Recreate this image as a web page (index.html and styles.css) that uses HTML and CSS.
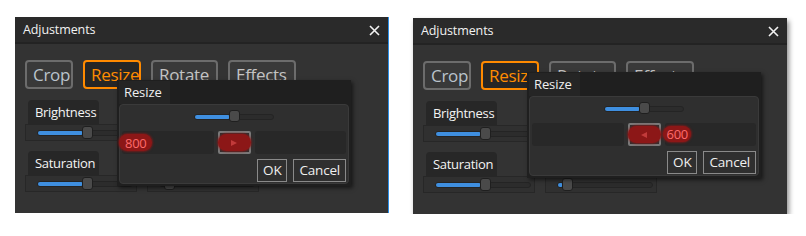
FILE: index.html
```html
<!DOCTYPE html>
<html>
<head>
<meta charset="utf-8">
<title>Adjustments</title>
<link rel="stylesheet" href="styles.css">
</head>
<body>
<div class="stage">

  <section class="window win-focused">
    <header class="titlebar">
      <span class="title">Adjustments</span>
      <svg class="close" width="11" height="11" viewBox="0 0 11 11"><path d="M1 1L10 10M10 1L1 10" stroke="#f2f2f2" stroke-width="1.6" fill="none"/></svg>
    </header>
    <div class="content">
      <nav class="tabs">
        <span class="tab tab-crop">Crop</span>
        <span class="tab tab-resize active">Resize</span>
        <span class="tab tab-rotate">Rotate</span>
        <span class="tab tab-effects">Effects</span>
      </nav>
      <div class="groups">
        <div class="group">
          <div class="glabel">Brightness</div>
          <div class="sbox"><div class="track"><div class="fill" style="width:45px"></div><div class="thumb" style="left:44px"></div></div></div>
        </div>
        <div class="group">
          <div class="glabel">Contrast</div>
          <div class="sbox"><div class="track"><div class="fill" style="width:45px"></div><div class="thumb" style="left:44px"></div></div></div>
        </div>
        <div class="group">
          <div class="glabel">Saturation</div>
          <div class="sbox"><div class="track"><div class="fill" style="width:45px"></div><div class="thumb" style="left:44px"></div></div></div>
        </div>
        <div class="group">
          <div class="glabel">Hue</div>
          <div class="sbox"><div class="track"><div class="fill" style="width:5px"></div><div class="thumb" style="left:4px"></div></div></div>
        </div>
      </div>
    </div>

    <div class="popup popup-a">
      <div class="phead"><span class="ptab">Resize</span></div>
      <div class="panel">
        <div class="prow-slider"><div class="ptrack"><div class="fill" style="width:35px"></div><div class="thumb" style="left:34px"></div></div></div>
        <div class="fields">
          <div class="field"><span class="pill pill-value">800</span></div>
          <div class="swap"><span class="pill pill-arrow"><svg width="8" height="8" viewBox="0 0 8 8"><path d="M1 1L7 4L1 7Z" fill="#c23a3a"/></svg></span></div>
          <div class="field"></div>
        </div>
        <div class="actions">
          <span class="btn">OK</span>
          <span class="btn">Cancel</span>
        </div>
      </div>
    </div>
  </section>

  <section class="window win-shadow">
    <header class="titlebar">
      <span class="title">Adjustments</span>
      <svg class="close" width="11" height="11" viewBox="0 0 11 11"><path d="M1 1L10 10M10 1L1 10" stroke="#f2f2f2" stroke-width="1.6" fill="none"/></svg>
    </header>
    <div class="content">
      <nav class="tabs">
        <span class="tab tab-crop">Crop</span>
        <span class="tab tab-resize active">Resize</span>
        <span class="tab tab-rotate">Rotate</span>
        <span class="tab tab-effects">Effects</span>
      </nav>
      <div class="groups">
        <div class="group">
          <div class="glabel">Brightness</div>
          <div class="sbox"><div class="track"><div class="fill" style="width:45px"></div><div class="thumb" style="left:44px"></div></div></div>
        </div>
        <div class="group">
          <div class="glabel">Contrast</div>
          <div class="sbox"><div class="track"><div class="fill" style="width:45px"></div><div class="thumb" style="left:44px"></div></div></div>
        </div>
        <div class="group">
          <div class="glabel">Saturation</div>
          <div class="sbox"><div class="track"><div class="fill" style="width:45px"></div><div class="thumb" style="left:44px"></div></div></div>
        </div>
        <div class="group">
          <div class="glabel">Hue</div>
          <div class="sbox"><div class="track"><div class="fill" style="width:5px"></div><div class="thumb" style="left:4px"></div></div></div>
        </div>
      </div>
    </div>

    <div class="popup popup-b">
      <div class="phead"><span class="ptab">Resize</span></div>
      <div class="panel">
        <div class="prow-slider"><div class="ptrack"><div class="fill" style="width:35px"></div><div class="thumb" style="left:34px"></div></div></div>
        <div class="fields">
          <div class="field"></div>
          <div class="swap"><span class="pill pill-arrow"><svg width="8" height="8" viewBox="0 0 8 8"><path d="M7 1L1 4L7 7Z" fill="#c23a3a"/></svg></span></div>
          <div class="field"><span class="pill pill-value pill-right">600</span></div>
        </div>
        <div class="actions">
          <span class="btn">OK</span>
          <span class="btn">Cancel</span>
        </div>
      </div>
    </div>
  </section>

</div>
</body>
</html>
```

FILE: styles.css
```css
* { box-sizing: border-box; }

html, body {
  margin: 0;
  padding: 0;
  background: #ffffff;
}

body {
  font-family: "Open Sans", "Noto Sans", "DejaVu Sans", sans-serif;
  color: #f0f0f0;
}

.stage {
  display: flex;
  align-items: flex-start;
  gap: 24px;
  padding: 17px 0 0 15px;
}

.window {
  position: relative;
  width: 374px;
  height: 196px;
  background: #333333;
}

.win-focused {
  border-right: 1px solid #2b8fe8;
}

.win-shadow {
  margin-top: 1px;
  box-shadow: 2px 3px 5px rgba(0, 0, 0, 0.45);
}

.titlebar {
  height: 27px;
  background: #2a2a2a;
  border-bottom: 2px solid #232323;
  display: flex;
  align-items: center;
  justify-content: space-between;
  padding: 0 8px 0 8px;
}

.title {
  font-size: 12.5px;
  color: #f2f2f2;
  letter-spacing: -0.1px;
}

.close {
  display: block;
  margin-top: 1px;
}

.content {
  padding: 16px 0 0 10px;
}

.tabs {
  display: flex;
  gap: 10px;
  height: 29px;
}

.tab {
  display: flex;
  align-items: center;
  height: 29px;
  padding: 0 0 1px 6px;
  border: 2px solid #6c6c6c;
  border-radius: 4px;
  background: #393939;
  color: #b9c3cc;
  font-size: 17px;
  letter-spacing: -0.3px;
  white-space: nowrap;
  overflow: hidden;
}

.tab-crop { width: 48px; }
.tab-resize { width: 58px; }
.tab-rotate { width: 67px; color: #c4c4c4; }
.tab-effects { width: 68px; color: #c4c4c4; }

.tab.active {
  border-color: #ff8a00;
  background: #262626;
  color: #ff8c00;
}

.groups {
  display: grid;
  grid-template-columns: 112px 112px;
  column-gap: 10px;
  row-gap: 10px;
  margin-top: 11px;
}

.group {
  display: flex;
  flex-direction: column;
  align-items: flex-start;
}

.glabel {
  margin-left: 3px;
  height: 24px;
  width: 71px;
  padding: 3px 0 0 7px;
  background: #272727;
  border-radius: 4px 4px 0 0;
  font-size: 13px;
  font-weight: 500;
  color: #f4f4f4;
  letter-spacing: -0.3px;
}

.sbox {
  width: 112px;
  height: 17px;
  border: 1px solid #272727;
  background: #303030;
  display: flex;
  align-items: center;
  padding: 0 3px 0 11px;
}

.track {
  position: relative;
  flex: 1;
  height: 6px;
  border: 1px solid #242424;
  border-radius: 3px;
  background: #2c2c2c;
}

.fill {
  height: 4px;
  background: #3f8fe0;
  border-radius: 2px;
}

.thumb {
  position: absolute;
  top: -5px;
  width: 11px;
  height: 13px;
  background: #4a4a4a;
  border: 1px solid #1f1f1f;
  border-radius: 3px;
}

/* popup */
.popup {
  position: absolute;
  width: 234px;
  height: 106px;
  background: #1f1f1f;
  box-shadow: 2px 2px 4px rgba(0, 0, 0, 0.55);
  display: flex;
  flex-direction: column;
}

.popup-a { left: 102px; top: 63px; }
.popup-b { left: 114px; top: 54px; }

.phead {
  height: 24px;
  display: flex;
  align-items: flex-end;
  padding-left: 2px;
}

.ptab {
  height: 23px;
  padding: 2px 8px 0 5px;
  background: #252525;
  font-size: 13px;
  color: #f0f0f0;
  letter-spacing: -0.1px;
}

.panel {
  flex: 1;
  margin: 0 2px 2px 2px;
  background: #2f2f2f;
  border: 1px solid #3a3a3a;
  border-radius: 4px;
  padding: 6px 2px 0 2px;
}

.prow-slider {
  height: 12px;
  display: flex;
  justify-content: center;
  align-items: center;
}

.ptrack {
  position: relative;
  width: 80px;
  height: 6px;
  border: 1px solid #242424;
  border-radius: 3px;
  background: #2c2c2c;
}

.ptrack .thumb {
  top: -5px;
  height: 12px;
}

.fields {
  display: grid;
  grid-template-columns: 1fr 33px 1fr;
  column-gap: 4px;
  margin-top: 8px;
  height: 22px;
}

.field {
  position: relative;
  background: #282828;
  border-radius: 3px;
}

.swap {
  position: relative;
  border: 2px solid #7a7a7a;
  border-radius: 2px;
  height: 23px;
}

.pill {
  position: absolute;
  display: flex;
  align-items: center;
  background: #8c1717;
  border-radius: 9px;
  box-shadow: 0 0 2px 1px rgba(140, 23, 23, 0.7);
}

.pill-value {
  left: -3px;
  top: 3px;
  width: 33px;
  height: 17px;
  padding-left: 6px;
  font-size: 13px;
  color: #ff6a6a;
  letter-spacing: -0.3px;
}

.pill-right {
  left: -2px;
  width: 28px;
  height: 16px;
  padding-left: 4px;
}

.pill-arrow {
  left: -2px;
  top: 1px;
  width: 33px;
  height: 17px;
  justify-content: center;
}

.pill-arrow svg { display: block; }

.actions {
  display: flex;
  justify-content: flex-end;
  gap: 6px;
  margin-top: 6px;
}

.btn {
  display: flex;
  align-items: center;
  justify-content: center;
  height: 23px;
  padding: 0 5px 1px 5px;
  border: 1px solid #8a8a8a;
  font-size: 13.5px;
  color: #f0f0f0;
  letter-spacing: -0.2px;
}
```
